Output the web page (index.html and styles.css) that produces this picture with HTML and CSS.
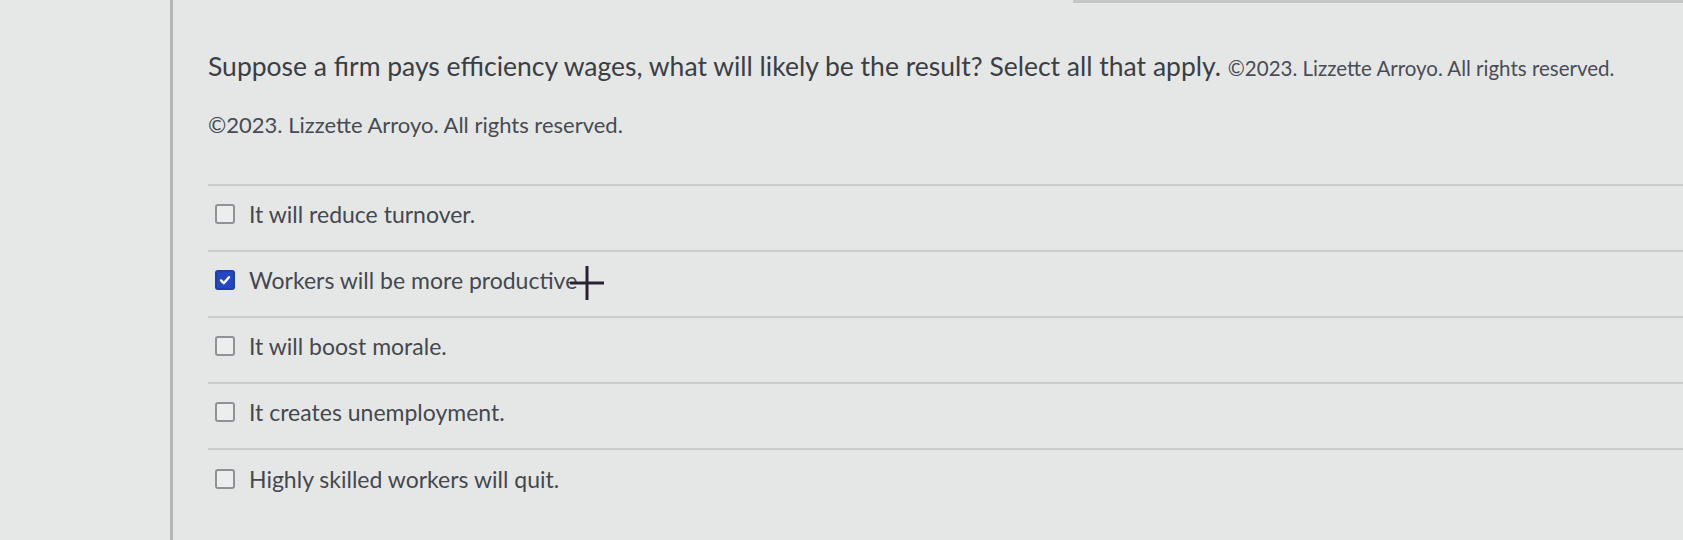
FILE: index.html
```html
<!DOCTYPE html>
<html>
<head>
<meta charset="utf-8">
<link rel="stylesheet" href="styles.css">
</head>
<body>
<div class="page">
  <aside class="sidebar"></aside>
  <main class="content">
    <p class="question">Suppose a firm pays efficiency wages, what will likely be the result? Select all that apply. <span class="copy">©2023. Lizzette Arroyo. All rights reserved.</span></p>
    <p class="copyright">©2023. Lizzette Arroyo. All rights reserved.</p>
    <ul class="options">
      <li class="option"><span class="box"></span><span class="label">It will reduce turnover.</span></li>
      <li class="option"><span class="box checked"><svg viewBox="0 0 20 20" width="20" height="20"><path d="M5 10.5 L8.5 14 L15 6.5" fill="none" stroke="#ffffff" stroke-width="3" stroke-linecap="round" stroke-linejoin="round"/></svg></span><span class="label">Workers will be more productive<span class="cursor"><svg viewBox="0 0 34 34" width="34" height="34"><path d="M17 0 V34 M0 17 H34" stroke="#2a2232" stroke-width="3" fill="none"/></svg></span></span></li>
      <li class="option"><span class="box"></span><span class="label">It will boost morale.</span></li>
      <li class="option"><span class="box"></span><span class="label">It creates unemployment.</span></li>
      <li class="option"><span class="box"></span><span class="label">Highly skilled workers will quit.</span></li>
    </ul>
  </main>
</div>
</body>
</html>
```
FILE: styles.css
```css
html, body {
  margin: 0;
  padding: 0;
  background: #e5e7e7;
}
body {
  width: 1683px;
  height: 540px;
  overflow: hidden;
  font-family: Lato, "Open Sans", sans-serif;
  color: #3b3e43;
}
.page {
  display: flex;
  height: 540px;
}
.sidebar {
  width: 170px;
  flex: none;
  background: #e6e8e8;
  border-right: 3px solid #b3b5b8;
}
.content {
  flex: 1;
  padding: 50px 0 0 35px;
  background-image: linear-gradient(#c4c6c8, #c4c6c8);
  background-repeat: no-repeat;
  background-position: 900px 0;
  background-size: 100% 3px;
}
.question {
  margin: 0;
  font-size: 26.5px;
  line-height: 32px;
  white-space: nowrap;
}
.question .copy {
  font-size: 20.5px;
  color: #4a4c55;
}
.copyright {
  margin: 28px 0 0 0;
  font-size: 22px;
  line-height: 26px;
  color: #474a52;
}
.options {
  list-style: none;
  margin: 46px 0 0 0;
  padding: 0;
  border-top: 2px solid #c9cbcd;
}
.option {
  display: flex;
  align-items: center;
  gap: 14px;
  height: 66px;
  padding: 0 0 8px 7px;
  box-sizing: border-box;
  border-bottom: 2px solid #c9cbcd;
}
.option:last-child {
  border-bottom: none;
}
.box {
  width: 16px;
  height: 16px;
  flex: none;
  border: 2px solid #8f9196;
  border-radius: 3px;
  background: #eceeee;
  display: flex;
  align-items: center;
  justify-content: center;
}
.box.checked {
  background: #2447c2;
  border-color: #1f3ea8;
}
.box.checked svg {
  width: 16px;
  height: 16px;
}
.label {
  font-size: 23px;
  color: #45484e;
  position: relative;
}
.cursor {
  position: absolute;
  right: -27px;
  top: 0;
  width: 34px;
  height: 34px;
}
```
